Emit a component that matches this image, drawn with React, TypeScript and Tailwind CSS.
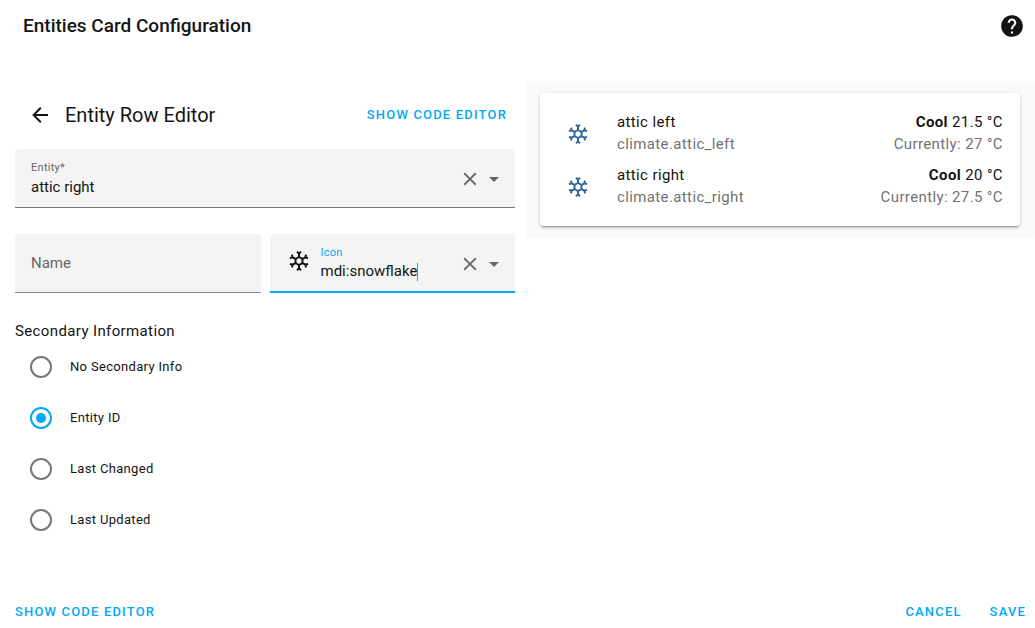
import { useState } from 'react';
import type { ReactNode } from 'react';

const SNOWFLAKE =
  'M20.79,13.95L18.46,14.57L16.46,13.44V10.56L18.46,9.43L20.79,10.05L21.31,8.12L19.54,7.65L20,5.88L18.07,5.36L17.45,7.69L15.45,8.82L13,7.38V5.12L14.71,3.41L13.29,2L12,3.29L10.71,2L9.29,3.41L11,5.12V7.38L8.5,8.82L6.5,7.69L5.92,5.36L4,5.88L4.47,7.65L2.7,8.12L3.22,10.05L5.55,9.43L7.55,10.56V13.45L5.55,14.58L3.22,13.96L2.7,15.89L4.47,16.36L4,18.12L5.93,18.64L6.55,16.31L8.55,15.18L11,16.62V18.88L9.29,20.59L10.71,22L12,20.71L13.29,22L14.7,20.59L13,18.88V16.62L15.5,15.17L17.5,16.3L18.12,18.63L20,18.12L19.53,16.35L21.3,15.88L20.79,13.95M9.5,10.56L12,9.11L14.5,10.56V13.44L12,14.89L9.5,13.44V10.56Z';
const CLOSE =
  'M19,6.41L17.59,5L12,10.59L6.41,5L5,6.41L10.59,12L5,17.59L6.41,19L12,13.41L17.59,19L19,17.59L13.41,12L19,6.41Z';
const MENU_DOWN = 'M7,10L12,15L17,10H7Z';
const ARROW_LEFT =
  'M20,11V13H8L13.5,18.5L12.08,19.92L4.16,12L12.08,4.08L13.5,5.5L8,11H20Z';
const HELP_CIRCLE =
  'M15.07,11.25L14.17,12.17C13.45,12.89 13,13.5 13,15H11V14.5C11,13.39 11.45,12.39 12.17,11.67L13.41,10.41C13.78,10.05 14,9.55 14,9C14,7.89 13.1,7 12,7A2,2 0 0,0 10,9H8A4,4 0 0,1 12,5A4,4 0 0,1 16,9C16,9.88 15.64,10.67 15.07,11.25M13,19H11V17H13M12,2A10,10 0 0,0 2,12A10,10 0 0,0 12,22A10,10 0 0,0 22,12C22,6.47 17.5,2 12,2Z';

const ENTITIES = [
  { name: 'attic left', id: 'climate.attic_left', target: '21.5 °C', current: '27 °C' },
  { name: 'attic right', id: 'climate.attic_right', target: '20 °C', current: '27.5 °C' },
];

const SECONDARY_INFO = ['No Secondary Info', 'Entity ID', 'Last Changed', 'Last Updated'];

function Icon({ path, className }: { path: string; className: string }) {
  return (
    <svg viewBox="0 0 24 24" fill="currentColor" className={`shrink-0 ${className}`} aria-hidden="true">
      <path d={path} />
    </svg>
  );
}

function TextButton({ children }: { children: ReactNode }) {
  return (
    <button type="button" className="text-[13px] leading-5 font-medium tracking-[0.09em] uppercase text-[#03a9f4]">
      {children}
    </button>
  );
}

function ComboActions({ field }: { field: string }) {
  return (
    <div className="flex items-center gap-px pt-[2px] text-[#666]">
      <button type="button" aria-label={`Clear ${field}`}>
        <Icon path={CLOSE} className="size-[22px]" />
      </button>
      <button type="button" aria-label={`Open ${field} list`}>
        <Icon path={MENU_DOWN} className="size-6" />
      </button>
    </div>
  );
}

function EditorForm() {
  const [entity, setEntity] = useState('attic right');
  const [icon, setIcon] = useState('mdi:snowflake');
  const [secondary, setSecondary] = useState('Entity ID');

  return (
    <form>
      <div className="flex h-[68px] items-center pl-[13px] pr-2">
        <button type="button" aria-label="Back">
          <Icon path={ARROW_LEFT} className="size-6" />
        </button>
        <h2 className="ml-[13px] mr-auto text-xl leading-7">Entity Row Editor</h2>
        <TextButton>Show code editor</TextButton>
      </div>

      <div className="flex h-[59px] items-center rounded-t border-b border-[#777] bg-[#f4f4f4] pl-4 pr-[9px]">
        <div className="flex min-w-0 flex-1 flex-col pt-[2px]">
          <label htmlFor="entity" className="text-[11px] leading-4 tracking-wide text-[#666]">
            Entity*
          </label>
          <input
            id="entity"
            value={entity}
            onChange={(e) => setEntity(e.target.value)}
            className="h-[22px] w-full text-[15px] outline-none"
          />
        </div>
        <ComboActions field="entity" />
      </div>

      <div className="mt-[26px] grid grid-cols-2 gap-[9px]">
        <input
          aria-label="Name"
          placeholder="Name"
          className="h-[59px] w-full rounded-t border-b border-[#888] bg-[#f4f4f4] px-4 text-[15px] outline-none placeholder:text-[#666]"
        />
        <div className="flex h-[59px] items-center rounded-t border-b-2 border-[#03a9f4] bg-[#f4f4f4] pl-[17px] pr-[9px]">
          <Icon path={SNOWFLAKE} className="mb-1 size-6" />
          <div className="ml-[10px] flex min-w-0 flex-1 flex-col pt-[2px]">
            <label htmlFor="icon" className="text-[11px] leading-4 tracking-wide text-[#03a9f4]">
              Icon
            </label>
            <div className="flex items-center">
              <input
                id="icon"
                value={icon}
                onChange={(e) => setIcon(e.target.value)}
                className="field-sizing-content h-[22px] text-[15px] caret-[#03a9f4] outline-none"
              />
              <span className="h-[18px] w-px shrink-0 bg-[#03a9f4]" />
            </div>
          </div>
          <ComboActions field="icon" />
        </div>
      </div>

      <fieldset className="mt-[26px]">
        <legend className="text-[15px] leading-6 tracking-wide">Secondary Information</legend>
        <div className="-mt-[2px]">
          {SECONDARY_INFO.map((option) => (
            <label key={option} className="flex h-[51px] items-center gap-[18px] pl-[15px] text-[13px] tracking-wide">
              <input
                type="radio"
                name="secondary"
                checked={secondary === option}
                onChange={() => setSecondary(option)}
                className="grid size-[22px] appearance-none place-items-center rounded-full border-2 border-[#777] checked:border-[#03a9f4] checked:before:size-[10px] checked:before:rounded-full checked:before:bg-[#03a9f4] checked:before:content-['']"
              />
              {option}
            </label>
          ))}
        </div>
      </fieldset>
    </form>
  );
}

function CardPreview() {
  return (
    <section className="self-start rounded bg-[#fafafa] py-3 pl-[14px] pr-[15px]">
      <div className="flex flex-col gap-[9px] rounded bg-white py-[18px] pl-[26px] pr-[17px] text-[15px] leading-[22px] tracking-wide shadow-[0_2px_2px_0_rgba(0,0,0,0.14),0_1px_5px_0_rgba(0,0,0,0.12),0_3px_1px_-2px_rgba(0,0,0,0.2)]">
        {ENTITIES.map((e) => (
          <div key={e.id} className="flex items-center">
            <Icon path={SNOWFLAKE} className="mt-[2px] size-6 text-[#336699]" />
            <div className="ml-[27px] flex-1">
              <p>{e.name}</p>
              <p className="text-[#727272]">{e.id}</p>
            </div>
            <div className="text-right">
              <p>
                <span className="font-bold">Cool</span> {e.target}
              </p>
              <p className="text-[#727272]">Currently: {e.current}</p>
            </div>
          </div>
        ))}
      </div>
    </section>
  );
}

export default function App() {
  return (
    <div className="flex min-h-screen flex-col bg-white font-[Roboto,sans-serif] text-[#141414]">
      <header className="flex h-[51px] items-center justify-between pl-[23px] pr-[10px]">
        <h1 className="text-[19px] leading-7 font-medium">Entities Card Configuration</h1>
        <button type="button" aria-label="Help">
          <Icon path={HELP_CIRCLE} className="size-[26px]" />
        </button>
      </header>

      <main className="mt-[30px] grid grid-cols-[500fr_509fr] gap-[11px] pl-[15px]">
        <EditorForm />
        <CardPreview />
      </main>

      <footer className="mt-auto flex items-center pb-[6px] pl-[15px] pr-[9px]">
        <TextButton>Show code editor</TextButton>
        <div className="ml-auto flex gap-7">
          <TextButton>Cancel</TextButton>
          <TextButton>Save</TextButton>
        </div>
      </footer>
    </div>
  );
}
